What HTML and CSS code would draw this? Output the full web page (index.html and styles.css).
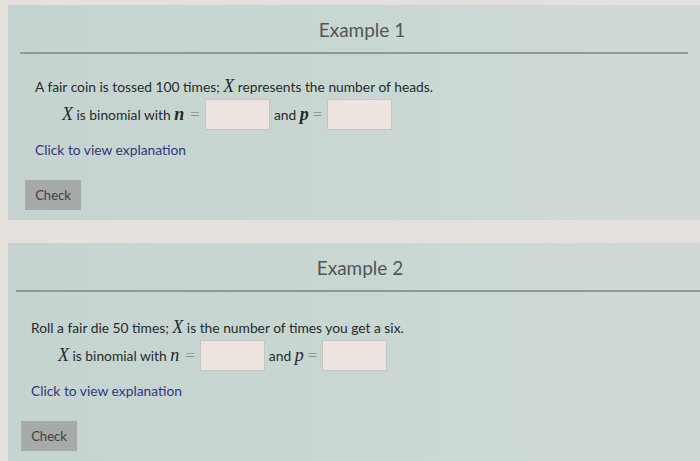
FILE: index.html
```html
<!DOCTYPE html>
<html lang="en">
<head>
  <meta charset="utf-8" />
  <title>Binomial Examples</title>
  <link rel="stylesheet" href="styles.css">
</head>
<body>
  <div class="page">

    <!-- Example 1 -->
    <section class="example">
      <h2 class="example-title">Example 1</h2>
      <hr class="rule">
      <p class="question">A fair coin is tossed 100 times; <i class="math">X</i> represents the number of heads.</p>
      <div class="answer-row">
        <i class="math">X</i>&nbsp;is binomial with&nbsp;<i class="math strong">n</i><span class="eq">=</span>
        <input class="answer" type="text">
        <span class="and">and&nbsp;<i class="math strong">p</i><span class="eq">=</span></span>
        <input class="answer" type="text">
      </div>
      <a class="explain" href="#">Click to view explanation</a>
      <button class="check" type="button">Check</button>
    </section>

    <!-- Example 2 -->
    <section class="example example-second">
      <h2 class="example-title">Example 2</h2>
      <hr class="rule">
      <p class="question">Roll a fair die 50 times; <i class="math">X</i> is the number of times you get a six.</p>
      <div class="answer-row">
        <i class="math">X</i>&nbsp;is binomial with&nbsp;<i class="math">n</i><span class="eq">=</span>
        <input class="answer" type="text">
        <span class="and">and&nbsp;<i class="math">p</i><span class="eq">=</span></span>
        <input class="answer" type="text">
      </div>
      <a class="explain" href="#">Click to view explanation</a>
      <button class="check" type="button">Check</button>
    </section>

  </div>
</body>
</html>
```

FILE: styles.css
```css
html, body { margin: 0; }
body { background: #e6e0dc; font-family: Lato, 'Open Sans', sans-serif; color: #262a2a; overflow: hidden; }

.page { padding: 5px 0 0 8px; display: flex; flex-direction: column; gap: 23px; }

.example { width: 704px; background: linear-gradient(90deg, #c5d4d0 0%, #c9d7d3 50%, #d1d9d6 100%); padding: 14px 0 10px 4px; box-sizing: border-box; display: flex; flex-direction: column; align-items: flex-start; }
.example-second { padding-left: 0; padding-bottom: 20px; }

.example-title { align-self: stretch; text-align: center; margin: 0; font-weight: normal; font-size: 19px; line-height: 22px; color: #525656; }
.rule { align-self: stretch; margin: 11px 24px 0 8px; border: 0; border-top: 2px solid #8e9894; height: 0; }
.example-second .rule { margin-right: 8px; }

.question { margin: 22px 0 0 23px; font-size: 13.8px; line-height: 20px; }
.example-second .question { margin-top: 25px; }

.answer-row { margin: 2px 0 0 50px; display: flex; align-items: center; font-size: 13.8px; }
.math { font-family: 'Liberation Serif', 'DejaVu Serif', serif; font-style: italic; font-size: 18px; }
.math.strong { font-weight: bold; }
.eq { color: #8c9290; font-family: 'Liberation Serif', serif; font-size: 17px; margin: 0 5px 0 6px; }
.and { margin: 0 2px 0 4px; display: flex; align-items: center; }
.and .eq { margin: 0 3px 0 4px; }

.answer { width: 65px; height: 31px; box-sizing: border-box; margin: 0; border: 1px solid #c8c4c0; background: #ede4e0; }

.explain { margin: 10px 0 0 23px; font-size: 13.8px; line-height: 20px; color: #33357a; text-decoration: none; }

.check { margin: 20px 0 0 13px; width: 56px; height: 30px; border: 0; background: #a6aaa8; color: #3e403f; font-family: Lato, sans-serif; font-size: 13px; padding: 0; }
```
